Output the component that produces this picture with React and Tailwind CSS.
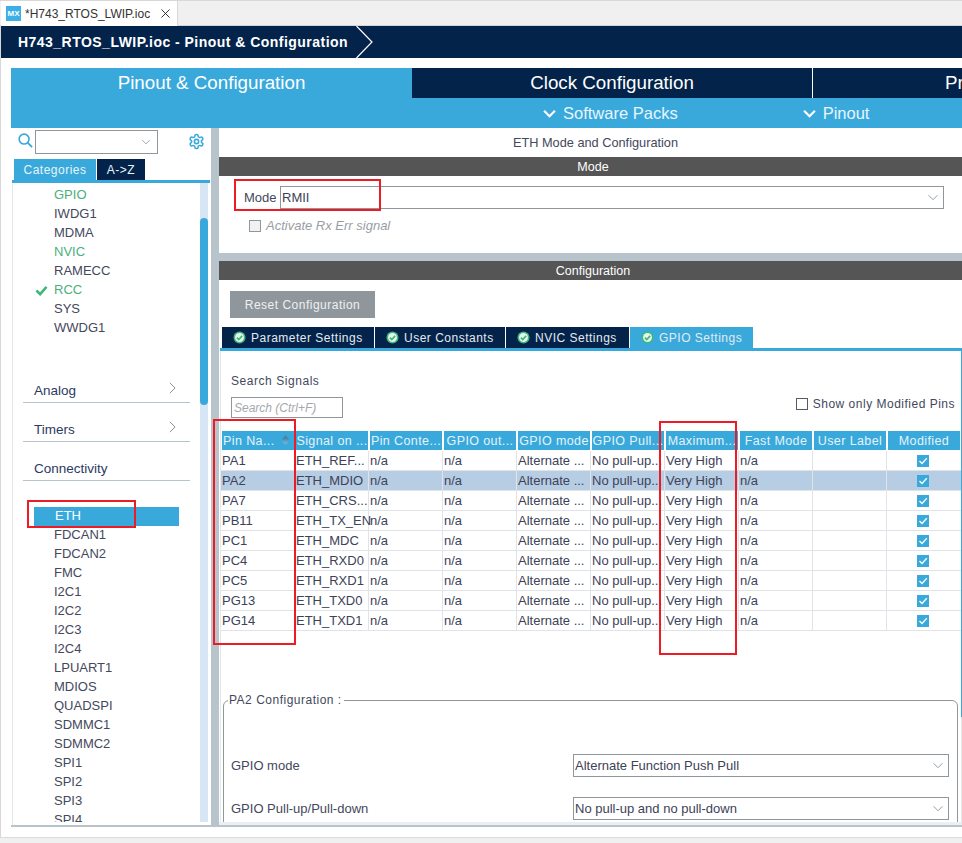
import React from "react";

const NAVY = "bg-[#03234b]";
const sans = { fontFamily: '"Liberation Sans", Arial, sans-serif' };

function Chev({ className = "", color = "#8f979d", w = 2 }) {
  return (
    <svg viewBox="0 0 12 8" className={className} fill="none" stroke={color} strokeWidth={w}>
      <path d="M1 1.5 L6 6.5 L11 1.5" />
    </svg>
  );
}

function TabCheck() {
  return (
    <svg viewBox="0 0 14 14" className="w-[13px] h-[13px] shrink-0">
      <circle cx="7" cy="7" r="6.5" fill="#3cb878" />
      <circle cx="7" cy="7" r="4.8" fill="#e8f6ee" />
      <path d="M4.2 7.2 L6.2 9.2 L9.9 5.3" fill="none" stroke="#3cb878" strokeWidth="1.8" />
    </svg>
  );
}

function Select({ children, className = "" }) {
  return (
    <div className={"h-[23px] border border-[#8f979d] bg-white flex items-center justify-between pl-[1px] pr-[3px] text-[13px] text-[#3d4258] " + className}>
      <span className="truncate">{children}</span>
      <Chev className="w-[12px] h-[7px] mr-[1px] shrink-0" w={1.1} />
    </div>
  );
}

function Item({ name, green, check }) {
  return (
    <div className={"h-[19px] flex items-center pl-[41px] pb-[1px] relative text-[13px] " + (green ? "text-[#4bb07a]" : "text-[#44485c]")}>
      {check && (
        <svg viewBox="0 0 14 12" className="absolute left-[21px] top-[4px] w-[15px] h-[11px]">
          <path d="M1.5 6 L5.5 10 L12.5 2" fill="none" stroke="#3cb878" strokeWidth="2.8" />
        </svg>
      )}
      {name}
    </div>
  );
}

function Section({ name, arrow }) {
  return (
    <div className="h-[39px] mx-[10px] w-[167px] border-b border-[#b8c4cc] flex items-end justify-between pb-[3px] pl-[11px] pr-[14px] text-[13.5px] text-[#2c3a63]">
      <span className="leading-[16px]">{name}</span>
      {arrow && (
        <svg viewBox="0 0 8 14" className="w-[7px] h-[12px] mb-[5px]" fill="none" stroke="#7f8790" strokeWidth="1.1">
          <path d="M1 1 L7 7 L1 13" />
        </svg>
      )}
    </div>
  );
}

function Sidebar() {
  const top = [["GPIO", 1], ["IWDG1"], ["MDMA"], ["NVIC", 1], ["RAMECC"], ["RCC", 1, 1], ["SYS"], ["WWDG1"]];
  const conn = ["FDCAN1", "FDCAN2", "FMC", "I2C1", "I2C2", "I2C3", "I2C4", "LPUART1", "MDIOS", "QUADSPI", "SDMMC1", "SDMMC2", "SPI1", "SPI2", "SPI3", "SPI4"];
  return (
    <div className="w-[200px] shrink-0 flex flex-col bg-white">
      <div className="h-[31px] flex items-start pt-[2px] shrink-0">
        <svg viewBox="0 0 16 16" className="w-[15px] h-[15px] ml-[7px] mt-[3px] shrink-0" fill="none" stroke="#39a9dc" strokeWidth="1.7">
          <circle cx="6.5" cy="6.5" r="5.3" />
          <path d="M10.5 10.5 L15 15" strokeWidth="2" />
        </svg>
        <div className="ml-[2px] w-[123px] h-[24px] border border-[#8f979d] flex items-center justify-end pr-[6px]">
          <Chev className="w-[10px] h-[6px]" w={1.1} />
        </div>
        <svg viewBox="0 0 24 24" className="w-[17px] h-[17px] ml-[30px] mt-[3px] shrink-0" fill="none" stroke="#39a9dc" strokeWidth="2.2">
          <path d="M12.22 2h-.44a2 2 0 0 0-2 2v.18a2 2 0 0 1-1 1.73l-.43.25a2 2 0 0 1-2 0l-.15-.08a2 2 0 0 0-2.73.73l-.22.38a2 2 0 0 0 .73 2.73l.15.1a2 2 0 0 1 1 1.72v.51a2 2 0 0 1-1 1.74l-.15.09a2 2 0 0 0-.73 2.73l.22.38a2 2 0 0 0 2.73.73l.15-.08a2 2 0 0 1 2 0l.43.25a2 2 0 0 1 1 1.73V20a2 2 0 0 0 2 2h.44a2 2 0 0 0 2-2v-.18a2 2 0 0 1 1-1.73l.43-.25a2 2 0 0 1 2 0l.15.08a2 2 0 0 0 2.73-.73l.22-.39a2 2 0 0 0-.73-2.73l-.15-.08a2 2 0 0 1-1-1.74v-.5a2 2 0 0 1 1-1.74l.15-.09a2 2 0 0 0 .73-2.73l-.22-.38a2 2 0 0 0-2.73-.73l-.15.08a2 2 0 0 1-2 0l-.43-.25a2 2 0 0 1-1-1.73V4a2 2 0 0 0-2-2z" />
          <circle cx="12" cy="12" r="3" />
        </svg>
      </div>
      <div className="h-[21px] flex pl-[3px] shrink-0 text-[12px] tracking-[0.5px] text-[#e8f4fb]">
        <div className="w-[82px] bg-[#39a9dc] flex items-center justify-center">Categories</div>
        <div className={"w-[48px] ml-[1px] flex items-center justify-center " + NAVY}>A-&gt;Z</div>
      </div>
      <div className="h-[3px] ml-[1px] mr-[1px] bg-[#39a9dc] shrink-0" />
      <div className="flex-1 min-h-0 flex ml-[1px] border-l border-[#e4e6e8]">
        <div className="w-[187px] h-[639px] overflow-hidden pt-[3px] shrink-0">
          {top.map(([n, g, c]) => <Item key={n} name={n} green={g} check={c} />)}
          <div className="h-[26px]" />
          <Section name="Analog" arrow />
          <Section name="Timers" arrow />
          <Section name="Connectivity" />
          <div className="h-[26px]" />
          <div className="ml-[21px] w-[145px] h-[19px] bg-[#39a9dc] text-white text-[13px] flex items-center pl-[21px] pb-[1px]">ETH</div>
          {conn.map((n) => <Item key={n} name={n} />)}
        </div>
        <div className="w-[8px] h-[639px] bg-[#d6e6f4] shrink-0">
          <div className="mt-[35px] h-[187px] bg-[#39a9dc] rounded-b-[4px] rounded-t-[4px]" />
        </div>
      </div>
    </div>
  );
}

const COLS = ["Pin Na...", "Signal on ...", "Pin Conte...", "GPIO out...", "GPIO mode", "GPIO Pull...", "Maximum...", "Fast Mode", "User Label", "Modified"];
const ROWS = [
  ["PA1", "ETH_REF..."],
  ["PA2", "ETH_MDIO"],
  ["PA7", "ETH_CRS..."],
  ["PB11", "ETH_TX_EN"],
  ["PC1", "ETH_MDC"],
  ["PC4", "ETH_RXD0"],
  ["PC5", "ETH_RXD1"],
  ["PG13", "ETH_TXD0"],
  ["PG14", "ETH_TXD1"],
];

function CheckBox() {
  return (
    <div className="w-[12px] h-[12px] bg-[#39a9dc] flex items-center justify-center">
      <svg viewBox="0 0 12 12" className="w-[12px] h-[12px]">
        <path d="M2.5 6 L5 8.5 L9.8 3.2" fill="none" stroke="#fff" strokeWidth="1.3" />
      </svg>
    </div>
  );
}

function PinTable() {
  return (
    <div className="w-[740px] text-[13px]">
      <div className="grid grid-cols-[repeat(10,74px)] h-[20px]">
        {COLS.map((c, i) => (
          <div key={c} className="mx-[1px] h-[19px] pt-[2px] bg-[#39a9dc] text-[#e4f3fb] text-[12.5px] tracking-[0.4px] flex items-center justify-center whitespace-nowrap overflow-hidden relative">
            <span className={i === 0 ? "mr-auto ml-[1px]" : ""}>{c}</span>
            {i === 0 && (
              <svg viewBox="0 0 10 12" className="absolute right-[4px] top-[4px] w-[9px] h-[11px]">
                <path d="M5 0 L9 5 L1 5 Z" fill="#5d7f98" />
                <path d="M1 7 L9 7 L5 11 Z" fill="#77a9c9" />
              </svg>
            )}
          </div>
        ))}
      </div>
      {ROWS.map(([pin, sig], r) => (
        <div key={pin} className={"grid grid-cols-[repeat(10,74px)] h-[20px] border-b border-[#e0e4e8] text-[#3d4258] " + (r === 1 ? "bg-[#b7cde4]" : "")}>
          {[pin, sig, "n/a", "n/a", "Alternate ...", "No pull-up...", "Very High", "n/a", "", null].map((v, i) => (
            <div key={i} className={"pl-[1px] flex items-center whitespace-nowrap border-r border-[#e0e4e8] " + (i === 9 ? "justify-center border-r-0" : "")}>
              {i === 9 ? <div className="mr-[4px]"><CheckBox /></div> : v}
            </div>
          ))}
        </div>
      ))}
    </div>
  );
}

function RightPanel() {
  const tabs = [
    ["Parameter Settings", "w-[152px]", NAVY],
    ["User Constants", "w-[130px]", NAVY],
    ["NVIC Settings", "w-[123px]", NAVY],
    ["GPIO Settings", "w-[123px]", "bg-[#39a9dc]"],
  ];
  return (
    <div className="flex-1 min-w-0 flex flex-col bg-white overflow-hidden">
      <div className="h-[29px] shrink-0 flex items-center justify-center text-[12.75px] text-[#44485c] pl-[10px]">ETH Mode and Configuration</div>
      <div className="h-[19px] shrink-0 bg-[#555555] text-white text-[12.5px] flex items-center justify-center pl-[5px] pt-[2px]">Mode</div>
      <div className="h-[77px] shrink-0 pt-[10px]">
        <div className="flex items-center ml-[25px] w-[700px]">
          <span className="text-[13px] text-[#44485c] w-[36px]">Mode</span>
          <Select className="w-[664px] text-[13px]">RMII</Select>
        </div>
        <div className="flex items-center ml-[30px] mt-[7px]">
          <div className="w-[12px] h-[12px] border border-[#8f979d] bg-[#f0f2f4]" />
          <span className="ml-[5px] italic text-[13px] text-[#9a9ea4]">Activate Rx Err signal</span>
        </div>
      </div>
      <div className="h-[8px] shrink-0 bg-[#b8c4cc]" />
      <div className="h-[19px] shrink-0 bg-[#555555] text-white text-[12.5px] flex items-center justify-center pl-[5px] pt-[2px]">Configuration</div>
      <div className="ml-[11px] mt-[11px] w-[145px] h-[27px] shrink-0 bg-[#8f979d] text-[#eef0f2] text-[12px] tracking-[0.5px] flex items-center justify-center">Reset Configuration</div>
      <div className="ml-[3px] mt-[9px] h-[21px] shrink-0 flex">
        {tabs.map(([t, w, bg]) => (
          <div key={t} className={"mr-[1px] flex items-center pl-[11px] gap-[5px] text-[12px] tracking-[0.5px] text-[#e4eaf0] " + w + " " + bg}>
            <TabCheck />
            {t}
          </div>
        ))}
      </div>
      <div className="ml-[1px] h-[3px] shrink-0 bg-[#39a9dc]" />
      <div className="flex-1 min-h-0 flex ml-[1px] border-l border-[#e4e6e8]">
        <div className="w-[740px] shrink-0 flex flex-col overflow-hidden">
          <div className="h-[80px] shrink-0 flex justify-between pl-[10px]">
            <div>
              <div className="mt-[22px] text-[12px] leading-[16px] text-[#44485c] tracking-[0.55px]">Search Signals</div>
              <div className="mt-[8px] w-[112px] h-[21px] border border-[#8f979d] flex items-center pl-[2px] italic text-[12px] text-[#a4a8ac]">Search (Ctrl+F)</div>
            </div>
            <div className="flex items-start mt-[47px] pr-[6px]">
              <div className="w-[12px] h-[12px] border border-[#555b66] bg-white" />
              <span className="ml-[5px] text-[12px] leading-[13px] tracking-[0.5px] text-[#44485c]">Show only Modified Pins</span>
            </div>
          </div>
          <PinTable />
          <div className="mt-[69px] ml-[2px] w-[735px] h-[200px] shrink-0 border border-[#8f979d] rounded-[6px] relative pt-[53px] pl-[7px] pr-[8px] text-[13px] text-[#44485c]">
            <div className="absolute -top-[8px] left-[4px] bg-white pr-[2px] pl-[1px] text-[12px] leading-[15px] tracking-[0.5px] text-[#44485c]">PA2 Configuration :</div>
            <div className="flex items-center justify-between">
              <span>GPIO mode</span>
              <Select className="w-[376px]">Alternate Function Push Pull</Select>
            </div>
            <div className="flex items-center justify-between mt-[20px]">
              <span>GPIO Pull-up/Pull-down</span>
              <Select className="w-[376px]">No pull-up and no pull-down</Select>
            </div>
          </div>
        </div>
        <div className="w-[1px] shrink-0 flex flex-col">
          <div className="h-[366px] bg-[#39a9dc]" />
          <div className="flex-1 bg-[#e4e6e8]" />
        </div>
      </div>
      <div className="h-[3px] shrink-0 bg-[#eceff1]" />
    </div>
  );
}

function Rect({ className }) {
  return <div className={"absolute border-2 border-[#ed1c24] pointer-events-none " + className} />;
}

export default function App() {
  return (
    <div className="relative w-[962px] h-[843px] overflow-hidden bg-white flex flex-col" style={sans}>
      <div className="h-[26px] shrink-0 bg-[#f0f0f0] border-t border-[#d8d8d8] border-b border-b-[#d4d4d4] flex">
        <div className="w-[177px] h-[25px] bg-white ml-[1px] flex items-center border-r border-[#d8d8d8] relative">
          <div className="ml-[5px] w-[15px] h-[15px] bg-[#3cb0e6] text-white text-[8px] font-bold flex items-center justify-center">MX</div>
          <span className="ml-[4px] text-[12px] text-[#333]">*H743_RTOS_LWIP.ioc</span>
          <svg viewBox="0 0 10 10" className="absolute left-[160px] top-[8px] w-[9px] h-[9px]" stroke="#222" strokeWidth="1" fill="none">
            <path d="M0.5 0.5 L9.5 9.5 M9.5 0.5 L0.5 9.5" />
          </svg>
        </div>
      </div>
      <div className={"h-[32px] shrink-0 ml-[1px] flex items-center relative " + NAVY}>
        <span className="ml-[17px] text-[14px] font-bold tracking-[0.47px] text-white whitespace-nowrap">H743_RTOS_LWIP.ioc - Pinout &amp; Configuration</span>
        <svg viewBox="0 0 17 32" className="w-[17px] h-[32px] ml-[8px] shrink-0" fill="none" stroke="#fff" strokeWidth="1.2">
          <path d="M0.5 0 L16 16 L0.5 32" />
        </svg>
      </div>
      <div className="h-[10px] shrink-0" />
      <div className="ml-[11px] shrink-0">
        <div className="h-[30px] flex text-[18.75px] text-white">
          <div className="w-[401px] bg-[#39a9dc] flex items-center justify-center">Pinout &amp; Configuration</div>
          <div className={"w-[400px] flex items-center justify-center " + NAVY}>Clock Configuration</div>
          <div className={"flex-1 ml-[1px] flex items-center overflow-hidden pl-[132px] whitespace-nowrap " + NAVY}>Pr</div>
        </div>
        <div className="h-[30px] bg-[#39a9dc] flex items-center text-[16.5px] text-[#e8f5fc]">
          <Chev className="w-[13px] h-[9px] ml-[532px]" color="#fff" />
          <span className="ml-[7px]">Software Packs</span>
          <Chev className="w-[13px] h-[9px] ml-[125px]" color="#fff" />
          <span className="ml-[7px]">Pinout</span>
        </div>
      </div>
      <div className="h-[697px] shrink-0 ml-[11px] flex">
        <Sidebar />
        <div className="w-[8px] shrink-0 bg-[#b8c4cc]" />
        <RightPanel />
      </div>
      <div className="h-[2px] shrink-0 ml-[11px] bg-[#b8c4cc]" />
      <div className="h-[10px] shrink-0" />
      <div className="flex-1 bg-[#f0f0f0] border-t border-[#dcdcdc]" />
      <div className="absolute left-0 top-[26px] bottom-[6px] w-[1px] bg-[#d8d8d8]" />

      <Rect className="left-[234px] top-[179px] w-[147px] h-[32px]" />
      <Rect className="left-[27px] top-[500px] w-[109px] h-[28px]" />
      <Rect className="left-[213px] top-[419px] w-[83px] h-[226px]" />
      <Rect className="left-[659px] top-[421px] w-[78px] h-[234px]" />
    </div>
  );
}
